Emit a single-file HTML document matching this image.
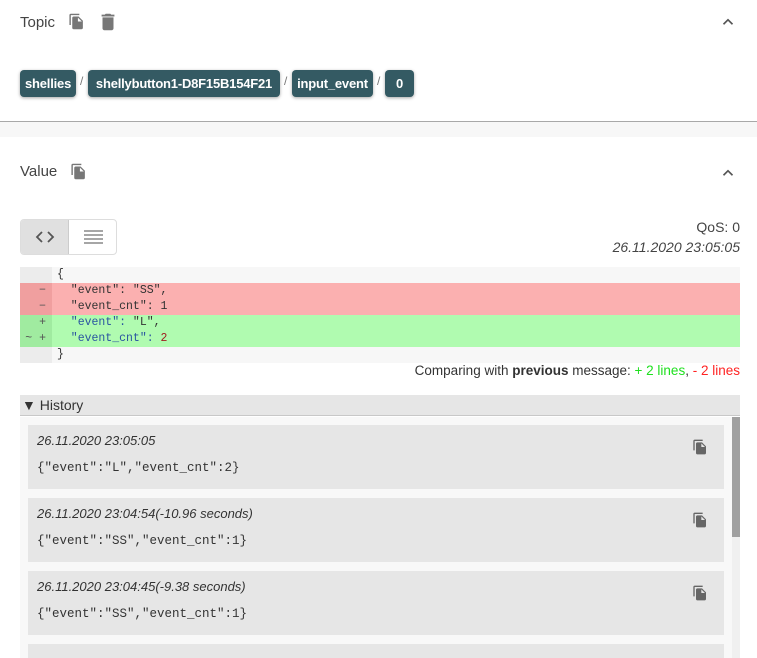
<!DOCTYPE html>
<html style="overflow:hidden;height:658px"><head><style>
*{box-sizing:border-box;margin:0;padding:0}
html,body{overflow:hidden}
body{width:757px;height:658px;background:#fff;font-family:"Liberation Sans",Arial,sans-serif;color:#333;position:relative}
.abs{position:absolute}
.title{font-size:15px;color:#444}
.chip{position:absolute;top:70px;height:27px;background:#345a63;color:#fff;font-weight:bold;font-size:13px;line-height:27px;padding:0 5px;border-radius:4px;box-shadow:0 1px 3px rgba(0,0,0,.35);text-align:center;letter-spacing:-0.2px}
.sl{position:absolute;top:74px;font-size:12px;color:#777}
.mono{font-family:"Liberation Mono",monospace}
.line{position:absolute;left:20px;width:720px;height:16px;font-size:11.5px;line-height:16px}
.gut{position:absolute;left:0;width:32px;height:16px;text-align:right;padding-right:6px;color:#555}
.code{position:absolute;left:37px}
.item{position:absolute;left:28px;width:696px;height:64px;background:#e6e6e6}
.item .d{position:absolute;left:9px;top:8px;font-style:italic;font-size:13px;color:#333}
.item .j{position:absolute;left:9px;top:36px;font-size:12.5px;font-family:"Liberation Mono",monospace;color:#333}
</style></head><body>
<svg width="0" height="0" style="position:absolute"><defs>
<symbol id="cp" viewBox="0 0 24 24"><path fill="currentColor" d="M16 1H4c-1.1 0-2 .9-2 2v14h2V3h12V1zm-1 4l6 6v10c0 1.1-.9 2-2 2H8c-1.1 0-2-.9-2-2V7c0-1.1.9-2 2-2h7zm-1 7h5.5L14 6.5V12z"/></symbol>
</defs></svg>
<div class="abs title" style="left:20px;top:14px">Topic</div>
<svg class="abs" style="left:68px;top:13px;color:#777" width="17" height="17"><use href="#cp"/></svg>
<svg class="abs" style="left:97px;top:11px" width="22" height="22" viewBox="0 0 24 24"><path fill="#777" d="M6 19c0 1.1.9 2 2 2h8c1.1 0 2-.9 2-2V7H6v12zM19 4h-3.5l-1-1h-5l-1 1H5v2h14V4z"/></svg>
<svg class="abs" style="left:719px;top:13px" width="18" height="18" viewBox="0 0 24 24"><path fill="none" stroke="#555" stroke-width="2.2" d="M6 15l6-6 6 6"/></svg>
<div class="chip" style="left:20px;width:56px">shellies</div>
<div class="sl" style="left:80px">/</div>
<div class="chip" style="left:88px;width:192px">shellybutton1-D8F15B154F21</div>
<div class="sl" style="left:284px">/</div>
<div class="chip" style="left:292px;width:81px">input_event</div>
<div class="sl" style="left:377px">/</div>
<div class="chip" style="left:385px;width:29px">0</div>
<div class="abs" style="left:0;top:121px;width:757px;height:1px;background:#a8a8a8"></div>
<div class="abs" style="left:0;top:122px;width:757px;height:15px;background:#f7f7f7"></div>
<div class="abs title" style="left:20px;top:163px">Value</div>
<svg class="abs" style="left:70px;top:163px;color:#777" width="17" height="17"><use href="#cp"/></svg>
<svg class="abs" style="left:719px;top:164px" width="18" height="18" viewBox="0 0 24 24"><path fill="none" stroke="#555" stroke-width="2.2" d="M6 15l6-6 6 6"/></svg>
<div class="abs" style="left:20px;top:219px;width:97px;height:36px;border:1px solid #ddd;border-radius:4px;overflow:hidden">
<div class="abs" style="left:0;top:0;width:48px;height:34px;background:#e0e0e0;border-right:1px solid #ccc"></div>
<svg class="abs" style="left:14px;top:9px" width="20" height="16" viewBox="0 0 20 16"><path fill="none" stroke="#555" stroke-width="1.8" d="M7 3L2 8l5 5M13 3l5 5-5 5"/></svg>
<svg class="abs" style="left:63px;top:9px" width="20" height="16" viewBox="0 0 20 16"><path stroke="#888" stroke-width="1.5" d="M0 2h19M0 6h19M0 10h19M0 14h19"/></svg>
</div>
<div class="abs" style="right:17px;top:219px;font-size:14px;color:#444">QoS: 0</div>
<div class="abs" style="right:17px;top:239px;font-size:14px;font-style:italic;color:#444">26.11.2020 23:05:05</div>
<div class="line mono" style="top:267px;background:#f7f7f7"><div class="gut" style="background:#ececec"></div><div class="code">{</div></div>
<div class="line mono" style="top:283px;background:#fbb0b0"><div class="gut" style="background:#f09f9f">−</div><div class="code">&nbsp;&nbsp;"event": "SS",</div></div>
<div class="line mono" style="top:299px;background:#fbb0b0"><div class="gut" style="background:#f09f9f">−</div><div class="code">&nbsp;&nbsp;"event_cnt": 1</div></div>
<div class="line mono" style="top:315px;background:#b0fbb0"><div class="gut" style="background:#a0eba0">+</div><div class="code" style="color:#2a55a0">&nbsp;&nbsp;"event": <span style="color:#333">"L",</span></div></div>
<div class="line mono" style="top:331px;background:#b0fbb0"><div class="gut" style="background:#a0eba0">~ +</div><div class="code" style="color:#2a55a0">&nbsp;&nbsp;"event_cnt": <span style="color:#a02020">2</span></div></div>
<div class="line mono" style="top:347px;background:#f7f7f7"><div class="gut" style="background:#ececec"></div><div class="code">}</div></div>
<div class="abs" style="right:17px;top:363px;font-size:13.5px;color:#333">Comparing with <b>previous</b> message: <span style="color:#1ee01e">+ 2 lines</span>, <span style="color:#f22">- 2 lines</span></div>
<div class="abs" style="left:20px;top:395px;width:720px;height:21px;background:#e6e6e6;border-bottom:1px solid #c8c8c8;font-size:14px;line-height:21px;padding-left:2px;color:#333">▼ History</div>
<div class="abs" style="left:20px;top:417px;width:720px;height:241px;background:#f8f8f8"></div>
<div class="abs" style="left:732px;top:417px;width:8px;height:241px;background:#f0f0f0"></div>
<div class="abs" style="left:732px;top:417px;width:8px;height:120px;background:#a0a0a0"></div>
<div class="item" style="top:425px"><div class="d">26.11.2020 23:05:05</div><div class="j">{"event":"L","event_cnt":2}</div><svg class="abs" style="left:664px;top:14px;color:#666" width="16" height="16"><use href="#cp"/></svg></div>
<div class="item" style="top:498px"><div class="d">26.11.2020 23:04:54(-10.96 seconds)</div><div class="j">{"event":"SS","event_cnt":1}</div><svg class="abs" style="left:664px;top:14px;color:#666" width="16" height="16"><use href="#cp"/></svg></div>
<div class="item" style="top:571px"><div class="d">26.11.2020 23:04:45(-9.38 seconds)</div><div class="j">{"event":"SS","event_cnt":1}</div><svg class="abs" style="left:664px;top:14px;color:#666" width="16" height="16"><use href="#cp"/></svg></div>
<div class="item" style="top:644px;height:14px"></div>
</body></html>
